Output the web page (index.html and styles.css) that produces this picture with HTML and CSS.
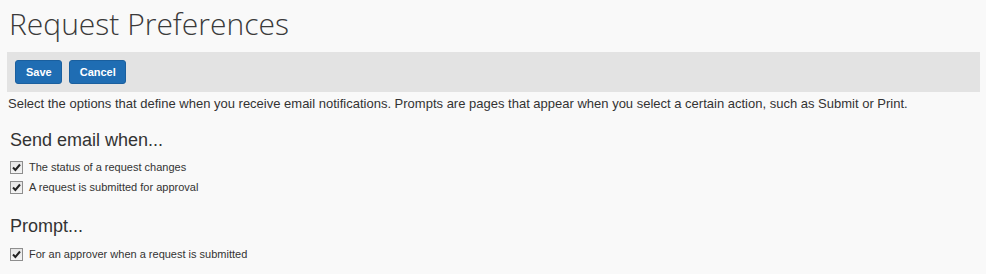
FILE: index.html
```html
<!DOCTYPE html>
<html>
<head>
<meta charset="utf-8">
<link rel="stylesheet" href="styles.css">
</head>
<body>
<div class="page">
  <h1 class="title">Request Preferences</h1>
  <div class="toolbar">
    <button class="btn">Save</button>
    <button class="btn">Cancel</button>
  </div>
  <p class="desc">Select the options that define when you receive email notifications. Prompts are pages that appear when you select a certain action, such as Submit or Print.</p>
  <h2 class="section">Send email when...</h2>
  <label class="opt"><span class="cb"><svg width="9" height="9" viewBox="0 0 9 9"><path d="M1 4.5 L3.4 7 L8 1.5" fill="none" stroke="#222" stroke-width="2"/></svg></span><span>The status of a request changes</span></label>
  <label class="opt"><span class="cb"><svg width="9" height="9" viewBox="0 0 9 9"><path d="M1 4.5 L3.4 7 L8 1.5" fill="none" stroke="#222" stroke-width="2"/></svg></span><span>A request is submitted for approval</span></label>
  <h2 class="section section2">Prompt...</h2>
  <label class="opt"><span class="cb"><svg width="9" height="9" viewBox="0 0 9 9"><path d="M1 4.5 L3.4 7 L8 1.5" fill="none" stroke="#222" stroke-width="2"/></svg></span><span>For an approver when a request is submitted</span></label>
</div>
</body>
</html>
```
FILE: styles.css
```css
html, body {
  margin: 0;
  padding: 0;
  background: #f9f9f9;
}
.page {
  padding: 0 6px 0 7px;
  font-family: "Liberation Sans", Arial, sans-serif;
  color: #333;
}
.title {
  margin: 0;
  padding: 2px 0 0 2px;
  height: 50px;
  font-family: "Open Sans", sans-serif;
  font-weight: 300;
  font-size: 30px;
  line-height: 44px;
  color: #3a3a3a;
}
.toolbar {
  display: flex;
  gap: 7px;
  background: #e3e3e3;
  height: 40px;
  align-items: center;
  padding: 0 8px;
  box-sizing: border-box;
}
.btn {
  background: #1f6db3;
  color: #fff;
  border: 1px solid #1a5f9e;
  border-radius: 3px;
  height: 24px;
  padding: 0 9px 0 10px;
  font-family: "Liberation Sans", Arial, sans-serif;
  font-weight: bold;
  font-size: 11px;
}
.desc {
  margin: 4px 0 0 1px;
  font-size: 13px;
  line-height: 16px;
}
.section {
  margin: 18px 0 0 3px;
  font-weight: normal;
  font-size: 18px;
  line-height: 20px;
}
.section2 {
  margin-top: 19px;
}
.opt {
  display: flex;
  align-items: center;
  gap: 6px;
  font-size: 11px;
  height: 20px;
  margin-left: 3px;
}
.cb {
  width: 11px;
  height: 11px;
  border: 1px solid #8e8e8e;
  background: linear-gradient(#e6e6e6, #f4f4f4);
  display: flex;
  align-items: center;
  justify-content: center;
}
.section + .opt {
  margin-top: 7px;
}
.section2 + .opt {
  margin-top: 8px;
}
```
